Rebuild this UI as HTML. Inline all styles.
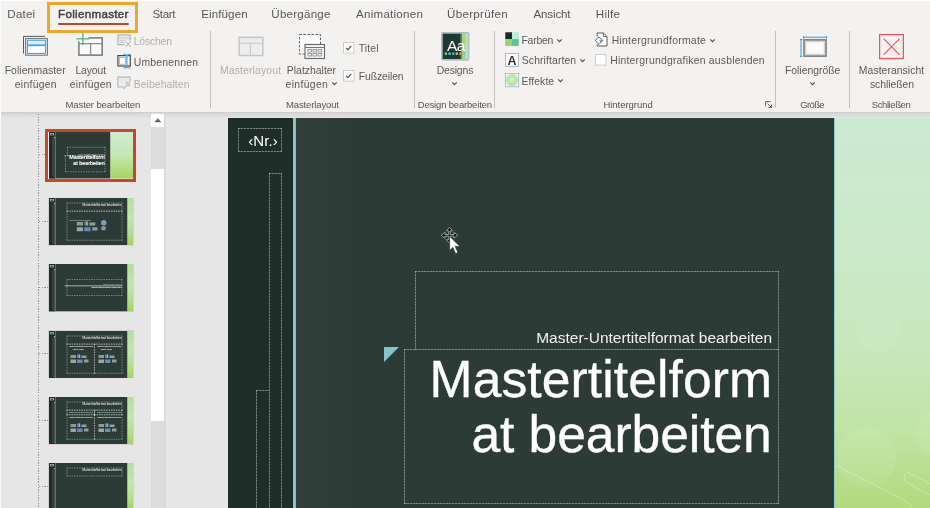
<!DOCTYPE html>
<html lang="de">
<head>
<meta charset="utf-8">
<title>Folienmaster</title>
<style>
html,body{margin:0;padding:0;}
body{width:930px;height:508px;overflow:hidden;background:#e6e6e6;font-family:"Liberation Sans",sans-serif;}
#app{position:relative;width:930px;height:508px;overflow:hidden;background:#e6e6e6;}
.t{position:absolute;white-space:nowrap;}
.abs{position:absolute;}
svg{position:absolute;overflow:visible;}
#soft{position:absolute;left:-12px;top:-12px;width:954px;height:532px;filter:blur(.35px);}
#stage{position:absolute;left:12px;top:12px;width:930px;height:508px;}

</style>
</head>
<body>
<div id="app"><div id="soft"><div id="stage">
<div style="position:absolute;left:-12px;top:-12px;width:954px;height:124px;background:#f3f2f1;"></div>
<div style="position:absolute;left:-12px;top:111.8px;width:954px;height:6.4px;background:linear-gradient(#cdcccb 0%,#d6d6d6 22%,#dcdcdc 55%,#e1e1e1 85%,#e6e6e6 100%);"></div>
<div style="position:absolute;left:-12px;top:118px;width:954px;height:404px;background:#e6e6e6;"></div>
<span class="t " style="left:7.35px;top:8.00px;font-size:11.6px;line-height:12px;color:#595755;letter-spacing:0.188px;">Datei</span>
<div style="position:absolute;left:47px;top:2px;width:91px;height:31px;box-sizing:border-box;border:3px solid #eba72e;"></div>
<span class="t " style="left:58.05px;top:8.00px;font-size:11.6px;line-height:12px;color:#41403f;letter-spacing:0.309px;-webkit-text-stroke:.45px #41403f;">Folienmaster</span>
<div style="position:absolute;left:58.3px;top:22.8px;width:70.4px;height:2.3px;background:#c5472a;border-radius:1.1px;"></div>
<span class="t " style="left:152.47px;top:8.00px;font-size:11.6px;line-height:12px;color:#595755;letter-spacing:-0.346px;">Start</span>
<span class="t " style="left:201.25px;top:8.00px;font-size:11.6px;line-height:12px;color:#595755;letter-spacing:0.087px;">Einfügen</span>
<span class="t " style="left:271.31px;top:8.00px;font-size:11.6px;line-height:12px;color:#595755;letter-spacing:0.226px;">Übergänge</span>
<span class="t " style="left:355.98px;top:8.00px;font-size:11.6px;line-height:12px;color:#595755;letter-spacing:0.249px;">Animationen</span>
<span class="t " style="left:447.11px;top:8.00px;font-size:11.6px;line-height:12px;color:#595755;letter-spacing:0.279px;">Überprüfen</span>
<span class="t " style="left:533.48px;top:8.00px;font-size:11.6px;line-height:12px;color:#595755;letter-spacing:-0.155px;">Ansicht</span>
<span class="t " style="left:595.85px;top:8.00px;font-size:11.6px;line-height:12px;color:#595755;letter-spacing:0.215px;">Hilfe</span>
<div style="position:absolute;left:209.7px;top:30.5px;width:1.2px;height:77.5px;background:#c4c2c0;"></div>
<div style="position:absolute;left:414.1px;top:30.5px;width:1.2px;height:77.5px;background:#c4c2c0;"></div>
<div style="position:absolute;left:494.3px;top:30.5px;width:1.2px;height:77.5px;background:#c4c2c0;"></div>
<div style="position:absolute;left:775.0px;top:30.5px;width:1.2px;height:77.5px;background:#c4c2c0;"></div>
<div style="position:absolute;left:848.9px;top:30.5px;width:1.2px;height:77.5px;background:#c4c2c0;"></div>
<span class="t " style="left:4.65px;top:65.00px;font-size:10.4px;line-height:11px;color:#5c5a58;letter-spacing:0.083px;">Folienmaster</span>
<span class="t " style="left:14.76px;top:79.00px;font-size:10.4px;line-height:11px;color:#5c5a58;letter-spacing:0.288px;">einfügen</span>
<span class="t " style="left:75.45px;top:65.00px;font-size:10.4px;line-height:11px;color:#5c5a58;letter-spacing:-0.119px;">Layout</span>
<span class="t " style="left:69.76px;top:79.00px;font-size:10.4px;line-height:11px;color:#5c5a58;letter-spacing:0.288px;">einfügen</span>
<span class="t " style="left:133.65px;top:36.00px;font-size:10.4px;line-height:11px;color:#b0aeac;letter-spacing:-0.149px;">Löschen</span>
<span class="t " style="left:133.70px;top:57.30px;font-size:10.4px;line-height:11px;color:#5c5a58;letter-spacing:0.226px;">Umbenennen</span>
<span class="t " style="left:133.65px;top:78.50px;font-size:10.4px;line-height:11px;color:#b0aeac;letter-spacing:0.099px;">Beibehalten</span>
<span class="t " style="left:219.95px;top:65.00px;font-size:10.4px;line-height:11px;color:#b0aeac;letter-spacing:0.154px;">Masterlayout</span>
<span class="t " style="left:286.85px;top:65.00px;font-size:10.4px;line-height:11px;color:#5c5a58;letter-spacing:0.009px;">Platzhalter</span>
<span class="t " style="left:285.56px;top:79.00px;font-size:10.4px;line-height:11px;color:#5c5a58;letter-spacing:0.345px;">einfügen</span>
<span class="t " style="left:358.67px;top:43.00px;font-size:10.4px;line-height:11px;color:#5c5a58;letter-spacing:0.146px;">Titel</span>
<span class="t " style="left:358.85px;top:71.30px;font-size:10.4px;line-height:11px;color:#5c5a58;letter-spacing:-0.104px;">Fußzeilen</span>
<span class="t " style="left:436.65px;top:65.00px;font-size:10.4px;line-height:11px;color:#5c5a58;letter-spacing:-0.141px;">Designs</span>
<span class="t " style="left:521.45px;top:35.30px;font-size:10.4px;line-height:11px;color:#5c5a58;letter-spacing:-0.205px;">Farben</span>
<span class="t " style="left:521.83px;top:55.30px;font-size:10.4px;line-height:11px;color:#5c5a58;letter-spacing:0.106px;">Schriftarten</span>
<span class="t " style="left:521.45px;top:75.70px;font-size:10.4px;line-height:11px;color:#5c5a58;letter-spacing:0.090px;">Effekte</span>
<span class="t " style="left:611.65px;top:35.30px;font-size:10.4px;line-height:11px;color:#5c5a58;letter-spacing:0.277px;">Hintergrundformate</span>
<span class="t " style="left:610.25px;top:55.30px;font-size:10.4px;line-height:11px;color:#5c5a58;letter-spacing:0.218px;">Hintergrundgrafiken ausblenden</span>
<span class="t " style="left:784.95px;top:65.00px;font-size:10.4px;line-height:11px;color:#5c5a58;">Foliengröße</span>
<span class="t " style="left:858.85px;top:65.00px;font-size:10.4px;line-height:11px;color:#5c5a58;letter-spacing:0.058px;">Masteransicht</span>
<span class="t " style="left:869.91px;top:79.00px;font-size:10.4px;line-height:11px;color:#5c5a58;letter-spacing:-0.043px;">schließen</span>
<span class="t " style="left:65.52px;top:98.50px;font-size:9.5px;line-height:11px;color:#575553;letter-spacing:-0.111px;">Master bearbeiten</span>
<span class="t " style="left:286.02px;top:98.50px;font-size:9.5px;line-height:11px;color:#575553;letter-spacing:-0.130px;">Masterlayout</span>
<span class="t " style="left:417.72px;top:98.50px;font-size:9.5px;line-height:11px;color:#575553;letter-spacing:-0.176px;">Design bearbeiten</span>
<span class="t " style="left:603.42px;top:98.50px;font-size:9.5px;line-height:11px;color:#575553;letter-spacing:-0.025px;">Hintergrund</span>
<span class="t " style="left:800.32px;top:98.50px;font-size:9.5px;line-height:11px;color:#575553;letter-spacing:-0.656px;">Größe</span>
<span class="t " style="left:871.77px;top:98.50px;font-size:9.5px;line-height:11px;color:#575553;letter-spacing:-0.412px;">Schließen</span>
<svg style="left:331.8px;top:82px" width="5" height="3" viewBox="0 0 5 3"><path d="M0.3 0.3 L2.5 2.6 L4.7 0.3" fill="none" stroke="#504e4c" stroke-width="1.15"/></svg>
<svg style="left:452px;top:82.3px" width="5" height="3" viewBox="0 0 5 3"><path d="M0.3 0.3 L2.5 2.6 L4.7 0.3" fill="none" stroke="#504e4c" stroke-width="1.15"/></svg>
<svg style="left:557px;top:38.7px" width="5" height="3" viewBox="0 0 5 3"><path d="M0.3 0.3 L2.5 2.6 L4.7 0.3" fill="none" stroke="#504e4c" stroke-width="1.15"/></svg>
<svg style="left:579.6px;top:58.8px" width="5" height="3" viewBox="0 0 5 3"><path d="M0.3 0.3 L2.5 2.6 L4.7 0.3" fill="none" stroke="#504e4c" stroke-width="1.15"/></svg>
<svg style="left:557.8px;top:79.3px" width="5" height="3" viewBox="0 0 5 3"><path d="M0.3 0.3 L2.5 2.6 L4.7 0.3" fill="none" stroke="#504e4c" stroke-width="1.15"/></svg>
<svg style="left:709.6px;top:38.7px" width="5" height="3" viewBox="0 0 5 3"><path d="M0.3 0.3 L2.5 2.6 L4.7 0.3" fill="none" stroke="#504e4c" stroke-width="1.15"/></svg>
<svg style="left:810.3px;top:82px" width="5" height="3" viewBox="0 0 5 3"><path d="M0.3 0.3 L2.5 2.6 L4.7 0.3" fill="none" stroke="#504e4c" stroke-width="1.15"/></svg>
<svg style="left:22px;top:35px" width="27" height="22" viewBox="0 0 27 22">
<path d="M1.5 18.6 V1.4 H23.2" fill="none" stroke="#5a5a5a" stroke-width="1"/>
<rect x="3.6" y="3.6" width="21.8" height="16.6" fill="#fff" stroke="#6a6a6a" stroke-width="1"/>
<rect x="5.4" y="5.3" width="18.2" height="13.2" fill="#fff" stroke="#4ba4e8" stroke-width="1.2"/>
<rect x="6" y="5.9" width="17" height="3.4" fill="#dcecfa"/>
<rect x="5.4" y="9.3" width="18.2" height="1.9" fill="#4ba4e8"/>
</svg>
<svg style="left:76px;top:33px" width="28" height="23" viewBox="0 0 28 23">
<rect x="2.9" y="4.9" width="23.3" height="17.2" fill="#fafafa" stroke="#808080" stroke-width="1.6"/>
<path d="M3 10.6 H26 M14.6 10.6 V22" stroke="#8e8e8e" stroke-width="1.2" fill="none"/>
<rect x="0" y="3.6" width="12.5" height="4.6" fill="#f3f2f1"/>
<path d="M0.4 5.9 H13.4 M6.9 0.3 V12.2" stroke="#55b573" stroke-width="1.3" fill="none"/>
</svg>
<svg style="left:110px;top:28px" width="30" height="67" viewBox="110 28 30 67">
<g>
<rect x="117.9" y="35.1" width="12.2" height="9.6" fill="#efefef" stroke="#b3b3b3" stroke-width="1.2"/>
<path d="M118 37.9 H130 M119.5 40.3 H126 M119.5 42.4 H124.5" stroke="#c4c4c4" stroke-width="1" fill="none"/>
<rect x="124.6" y="40.6" width="7" height="6.4" fill="#f3f2f1"/>
<path d="M125.6 41.6 L130.8 46.6 M130.8 41.6 L125.6 46.6" stroke="#b9b9b9" stroke-width="1.1" fill="none"/>
</g>
<g>
<rect x="117.9" y="55.6" width="12.4" height="10.4" fill="#f7f7f7" stroke="#4a4a4a" stroke-width="1.2"/>
<rect x="119.6" y="57.4" width="6" height="6.8" fill="#fff" stroke="#9a9a9a" stroke-width="0.7"/>
<path d="M123.3 54.3 Q126.6 54.3 126.9 56 Q127.2 54.3 130.5 54.3 M126.9 56 V66.3 M123.3 68 Q126.6 68 126.9 66.3 Q127.2 68 130.5 68" stroke="#4ba4e8" stroke-width="1.2" fill="none"/>
</g>
<g>
<path d="M124 87 H117.9 V77.2 H130.1 V82" fill="#f1f1f1" stroke="#b5b5b5" stroke-width="1.2"/>
<rect x="119.4" y="78.8" width="9" height="5" fill="#e9e9e9"/>
<path d="M126.3 81.8 L130.4 85.9 M129.9 82.3 L126.8 85.4 M126.6 85.6 L123 89.2" stroke="#b9b9b9" stroke-width="1.2" fill="none"/>
<path d="M127.2 82 L130.2 85 L128.2 86.6 L125.6 84 Z" fill="#d5d5d5" stroke="#b9b9b9" stroke-width="0.6"/>
</g>
</svg>
<svg style="left:238px;top:36px" width="26" height="21" viewBox="0 0 26 21">
<rect x="1.1" y="1.3" width="23.8" height="18.2" fill="#ededed" stroke="#c3c3c3" stroke-width="1.4"/>
<path d="M1 7.2 H25 M12.4 7.2 V19.5" stroke="#c8c8c8" stroke-width="1.1" fill="none"/>
</svg>
<svg style="left:298px;top:33px" width="28" height="27" viewBox="0 0 28 27">
<rect x="1.5" y="1.5" width="21" height="19.5" fill="#fbfbfb" stroke="#666" stroke-width="1" stroke-dasharray="2.5 1.5"/>
<rect x="7" y="11.5" width="19.5" height="14" fill="#f6f6f6" stroke="#666" stroke-width="1.1"/>
<path d="M7 14.5 H26.5" stroke="#777" stroke-width="1"/>
<g fill="none" stroke="#888" stroke-width="0.8"><rect x="10" y="16.5" width="3.5" height="2.5"/><rect x="15" y="16.5" width="3.5" height="2.5"/><rect x="20" y="16.5" width="3.5" height="2.5"/><rect x="10" y="20.5" width="3.5" height="2.5"/><rect x="15" y="20.5" width="3.5" height="2.5"/><rect x="20" y="20.5" width="3.5" height="2.5"/></g>
</svg>
<svg style="left:342.6px;top:41.8px" width="11.4" height="11.6" viewBox="0 0 11.4 11.6"><rect x="0.5" y="0.5" width="10.4" height="10.6" fill="#fff" stroke="#cfcdcb" stroke-width="1"/><path d="M3 5.8 L4.9 7.7 L8.3 3.9" fill="none" stroke="#4a4a4a" stroke-width="1.1"/></svg>
<svg style="left:342.6px;top:70.2px" width="11.4" height="11.6" viewBox="0 0 11.4 11.6"><rect x="0.5" y="0.5" width="10.4" height="10.6" fill="#fff" stroke="#cfcdcb" stroke-width="1"/><path d="M3 5.8 L4.9 7.7 L8.3 3.9" fill="none" stroke="#4a4a4a" stroke-width="1.1"/></svg>
<svg style="left:594.5px;top:54px" width="11.4" height="11.6" viewBox="0 0 11.4 11.6"><rect x="0.5" y="0.5" width="10.4" height="10.6" fill="#fff" stroke="#cfcdcb" stroke-width="1"/></svg>
<svg style="left:440.7px;top:32px" width="28.4" height="28.7" viewBox="0 0 28.4 28.7">
<rect x="0" y="0" width="28.4" height="28.7" rx="1.6" fill="#b3bccd"/>
<rect x="1.7" y="1.7" width="19" height="25.3" fill="#20382f"/>
<rect x="20.4" y="1.7" width="6.3" height="25.3" fill="#a6d389"/>
<rect x="19.4" y="1.7" width="1.6" height="25.3" fill="#5d8a60"/>
<rect x="24.6" y="1.7" width="2.1" height="25.3" fill="#c5e5b2"/>
<text x="6" y="18.6" font-family="Liberation Sans, sans-serif" font-size="15.5" fill="#fff" letter-spacing="-0.6">Aa</text>
<g><rect x="3.7" y="20.5" width="2.4" height="2.4" fill="#7ed36a"/><rect x="7.4" y="20.5" width="2.4" height="2.4" fill="#59c9b5"/><rect x="11.1" y="20.5" width="2.4" height="2.4" fill="#49a6e0"/><rect x="14.7" y="20.5" width="2.4" height="2.4" fill="#f0b43c"/><rect x="18.2" y="20.5" width="2.4" height="2.4" fill="#ee8a3a"/><rect x="21.7" y="20.5" width="2.4" height="2.4" fill="#6cc0ea"/></g>
</svg>
<svg style="left:505px;top:31.9px" width="14" height="14.2" viewBox="0 0 14 14.2">
<rect x="0" y="0" width="14" height="14.2" fill="#dfe5e2"/>
<rect x="0.3" y="0.3" width="6.7" height="6.8" fill="#1b2a25"/>
<rect x="7" y="0.3" width="6.7" height="6.8" fill="#b5f0dc"/>
<rect x="0.3" y="7.1" width="6.7" height="6.8" fill="#92d37c"/>
<rect x="7" y="7.1" width="6.7" height="6.8" fill="#5ec48d"/>
</svg>
<svg style="left:505px;top:52.6px" width="14" height="14.2" viewBox="0 0 14 14.2">
<rect x="0.5" y="0.5" width="13" height="13.2" fill="#fff" stroke="#b3bccd" stroke-width="1"/>
<text x="7" y="12" text-anchor="middle" font-family="Liberation Sans, sans-serif" font-size="12.5" font-weight="bold" fill="#3a3336">A</text>
</svg>
<svg style="left:505px;top:73px" width="14" height="14.2" viewBox="0 0 14 14.2">
<defs><radialGradient id="efg" cx="50%" cy="45%" r="60%"><stop offset="0" stop-color="#d3efc8"/><stop offset="0.75" stop-color="#b4e3a3"/><stop offset="1" stop-color="#9fd98a"/></radialGradient></defs>
<rect x="0.5" y="0.5" width="13" height="13.2" fill="#f6f6f6" stroke="#b3bccd" stroke-width="1"/>
<circle cx="7" cy="7.1" r="6" fill="url(#efg)"/>
</svg>
<svg style="left:594px;top:31.8px" width="14" height="15" viewBox="0 0 14 15">
<path d="M3.2 4.5 V1 H9.4 L13 4.6 V14 H3.2 V12.2" fill="#fff" stroke="#5a5a5a" stroke-width="1"/>
<path d="M9.4 1 V4.6 H13" fill="none" stroke="#5a5a5a" stroke-width="0.9"/>
<path d="M1.2 8.6 L5 4.8 L8.8 8.6 L5 12.4 Z" fill="#fff" stroke="#5a5a5a" stroke-width="1"/>
<path d="M5.2 8.6 H8.6 L7 10.4 Z" fill="#3a96dd"/>
<circle cx="7.4" cy="8.6" r="1.1" fill="#4ba4e8"/>
</svg>
<svg style="left:765.2px;top:100.7px" width="7.2" height="7.2" viewBox="0 0 7.2 7.2">
<path d="M0.6 5.4 V0.6 H5.4" fill="none" stroke="#5f5f5f" stroke-width="1"/>
<path d="M2.6 2.6 L6.5 6.5 M6.6 3.4 V6.6 H3.4" fill="none" stroke="#5f5f5f" stroke-width="1"/>
</svg>
<svg style="left:800px;top:35.5px" width="27" height="22" viewBox="0 0 27 22">
<rect x="4" y="3.9" width="22" height="16.2" fill="#fafafa" stroke="#7a7a7a" stroke-width="1.6"/>
<rect x="5.8" y="5.7" width="18.4" height="12.6" fill="none" stroke="#bdbdbd" stroke-width="0.8"/>
<path d="M3.5 1.2 H26.5 M3.5 0 V2.5 M26.5 0 V2.5" stroke="#3a96dd" stroke-width="1" fill="none"/>
<path d="M1 3.5 V20.6 M0 3.5 H2.2 M0 20.6 H2.2" stroke="#3a96dd" stroke-width="1" fill="none"/>
</svg>
<svg style="left:879.3px;top:33.7px" width="25" height="25.3" viewBox="0 0 25 25.3">
<rect x="0.6" y="0.6" width="23.8" height="24.1" fill="#fbf3f3" stroke="#e9535e" stroke-width="1.2"/>
<rect x="1.8" y="1.8" width="21.4" height="21.7" fill="none" stroke="#f6c9cc" stroke-width="0.8"/>
<path d="M4.6 4.6 L20.6 20.8 M20.6 4.6 L4.6 20.8" stroke="#e9535e" stroke-width="1.15" fill="none"/>
</svg>
<div style="position:absolute;left:27px;top:112.8px;width:106.5px;height:1px;background:#d3d3d3;"></div>
<div style="position:absolute;left:38px;top:114px;width:1px;height:400px;background:repeating-linear-gradient(180deg,#999 0,#999 1.3px,rgba(0,0,0,0) 1.3px,rgba(0,0,0,0) 2.7px);"></div>
<div style="position:absolute;left:39px;top:154.2px;width:6px;height:1px;background:repeating-linear-gradient(90deg,#999 0,#999 1.3px,rgba(0,0,0,0) 1.3px,rgba(0,0,0,0) 2.7px);"></div>
<div style="position:absolute;left:39px;top:220.7px;width:9.5px;height:1px;background:repeating-linear-gradient(90deg,#999 0,#999 1.3px,rgba(0,0,0,0) 1.3px,rgba(0,0,0,0) 2.7px);"></div>
<div style="position:absolute;left:39px;top:287.0px;width:9.5px;height:1px;background:repeating-linear-gradient(90deg,#999 0,#999 1.3px,rgba(0,0,0,0) 1.3px,rgba(0,0,0,0) 2.7px);"></div>
<div style="position:absolute;left:39px;top:353.4px;width:9.5px;height:1px;background:repeating-linear-gradient(90deg,#999 0,#999 1.3px,rgba(0,0,0,0) 1.3px,rgba(0,0,0,0) 2.7px);"></div>
<div style="position:absolute;left:39px;top:419.7px;width:9.5px;height:1px;background:repeating-linear-gradient(90deg,#999 0,#999 1.3px,rgba(0,0,0,0) 1.3px,rgba(0,0,0,0) 2.7px);"></div>
<div style="position:absolute;left:39px;top:486.0px;width:9.5px;height:1px;background:repeating-linear-gradient(90deg,#999 0,#999 1.3px,rgba(0,0,0,0) 1.3px,rgba(0,0,0,0) 2.7px);"></div>
<div style="position:absolute;left:150.6px;top:113.6px;width:14.2px;height:400px;background:#d9d9d9;"></div>
<div style="position:absolute;left:151px;top:114px;width:13.4px;height:400px;background:#dcdcdc;"></div>
<div style="position:absolute;left:165.3px;top:118px;width:1px;height:400px;background:#dedede;"></div>
<div style="position:absolute;left:151px;top:114px;width:13.3px;height:12.8px;background:#fff;"></div>
<svg style="left:153.7px;top:118.3px" width="7.7" height="4.4" viewBox="0 0 8 5"><path d="M0 4.7 L4 0.3 L8 4.7 Z" fill="#686868"/></svg>
<div style="position:absolute;left:151px;top:168.6px;width:13.3px;height:252.6px;background:#fff;"></div>
<div style="position:absolute;left:45.2px;top:128.5px;width:91px;height:53.5px;background:#f3f2f1;border:3px solid #c6482a;box-sizing:border-box;"></div>
<div class="abs" style="left:48.7px;top:132px;width:84.6px;height:46.5px;overflow:hidden;"><div style="position:absolute;left:0;top:0;width:338.4px;height:186.0px;transform:scale(0.25);transform-origin:0 0;"><div style="position:absolute;left:0.0px;top:0.0px;width:246.0px;height:186.0px;background:#2d3b36;"></div><div style="position:absolute;left:246.0px;top:0.0px;width:92.4px;height:186.0px;background:linear-gradient(180deg,#cdebd3 0%,#c4e8b4 50%,#a6d45e 100%);"></div><div style="position:absolute;left:0.0px;top:0.0px;width:24.0px;height:186.0px;background:#202e2a;"></div><div style="position:absolute;left:24.0px;top:0.0px;width:2.4px;height:186.0px;background:#74b0b5;"></div><div style="position:absolute;left:4.0px;top:4.0px;width:16.0px;height:9.0px;border:2px solid #ddd;box-sizing:border-box;"></div><div style="position:absolute;left:15.0px;top:20.0px;width:7.0px;height:160.0px;border:2px dotted rgba(230,230,230,.8);box-sizing:border-box;"></div><div style="position:absolute;left:73.0px;top:60.0px;width:152.0px;height:36.0px;border:2.6px dashed rgba(235,235,235,.8);box-sizing:border-box;"></div><div style="position:absolute;left:65.0px;top:94.0px;width:160.0px;height:66.0px;border:2.6px dashed rgba(235,235,235,.8);box-sizing:border-box;"></div><div style="position:absolute;left:60.0px;top:93.0px;width:6.0px;height:6.0px;background:#86c4c9;clip-path:polygon(0 0,100% 0,0 100%);"></div><div style="position:absolute;right:115.4px;top:90.0px;font-size:21.5px;line-height:21.5px;color:#fff;white-space:nowrap;font-weight:normal;-webkit-text-stroke:.7px #fff">Mastertitelform</div><div style="position:absolute;right:115.4px;top:115.0px;font-size:21.5px;line-height:21.5px;color:#fff;white-space:nowrap;font-weight:normal;-webkit-text-stroke:.7px #fff">at bearbeiten</div><div style="position:absolute;right:115.4px;top:84.0px;font-size:7px;line-height:7px;color:#ccc;white-space:nowrap;font-weight:normal">Master-Untertitelformat bearbeiten</div></div></div>
<div style="position:absolute;left:48.1px;top:197.5px;width:85.5px;height:48.3px;background:#d2d2d2;"></div>
<div class="abs" style="left:48.6px;top:198px;width:84.5px;height:47.3px;overflow:hidden;"><div style="position:absolute;left:0;top:0;width:338.0px;height:189.2px;transform:scale(0.25);transform-origin:0 0;"><div style="position:absolute;left:0.0px;top:0.0px;width:314.0px;height:189.2px;background:#2d3b36;"></div><div style="position:absolute;left:314.0px;top:0.0px;width:24.0px;height:189.2px;background:linear-gradient(180deg,#b3dfa0 0%,#c1e6ae 42%,#b5de8c 75%,#a3d35c 100%);"></div><div style="position:absolute;left:0.0px;top:0.0px;width:24.0px;height:189.2px;background:#202e2a;"></div><div style="position:absolute;left:24.0px;top:0.0px;width:2.4px;height:189.2px;background:#74b0b5;"></div><div style="position:absolute;left:4.0px;top:4.0px;width:16.0px;height:9.0px;border:2px solid #ddd;box-sizing:border-box;"></div><div style="position:absolute;left:15.0px;top:20.0px;width:7.0px;height:163.2px;border:2px dotted rgba(230,230,230,.8);box-sizing:border-box;"></div><div style="position:absolute;left:71.0px;top:19.0px;width:222.0px;height:34.0px;border:2.6px dashed rgba(235,235,235,.8);box-sizing:border-box;"></div><div style="position:absolute;left:71.0px;top:52.0px;width:222.0px;height:118.0px;border:2.6px dashed rgba(235,235,235,.8);box-sizing:border-box;"></div><div style="position:absolute;right:48.0px;top:23.0px;font-size:12.5px;line-height:12.5px;color:#fff;white-space:nowrap;font-weight:normal">Mastertitelformat bearbeiten</div><div style="position:absolute;right:170.0px;top:84.0px;font-size:7px;line-height:7px;color:#ddd;white-space:nowrap;font-weight:normal">Mastertextformat bearbeiten</div><div style="position:absolute;left:110.9px;top:95.9px;width:25.3px;height:13.8px;background:#9aa3a0;opacity:.9;"></div><div style="position:absolute;left:140.8px;top:93.6px;width:16.1px;height:16.1px;background:#5a86c0;opacity:.9;"></div><div style="position:absolute;left:148.8px;top:93.6px;width:5.8px;height:16.1px;background:#e0b050;opacity:.9;"></div><div style="position:absolute;left:161.5px;top:98.2px;width:23.0px;height:11.5px;background:#8ab5a8;opacity:.9;"></div><div style="position:absolute;left:110.9px;top:116.6px;width:25.3px;height:16.1px;background:#aab0ae;opacity:.9;"></div><div style="position:absolute;left:140.8px;top:116.6px;width:25.3px;height:16.1px;background:#6f93c4;opacity:.9;"></div><div style="position:absolute;left:173.0px;top:116.6px;width:20.7px;height:13.8px;background:#a0a6a4;opacity:.9;"></div><div style="position:absolute;left:208.0px;top:88.0px;width:22.0px;height:22.0px;background:#8fb1c8;border-radius:50%;opacity:.85;"></div><div style="position:absolute;left:208.0px;top:112.0px;width:20.0px;height:18.0px;background:#9fb3be;border-radius:50%;opacity:.75;"></div></div></div>
<div style="position:absolute;left:48.1px;top:263.8px;width:85.5px;height:48.3px;background:#d2d2d2;"></div>
<div class="abs" style="left:48.6px;top:264.3px;width:84.5px;height:47.3px;overflow:hidden;"><div style="position:absolute;left:0;top:0;width:338.0px;height:189.2px;transform:scale(0.25);transform-origin:0 0;"><div style="position:absolute;left:0.0px;top:0.0px;width:314.0px;height:189.2px;background:#2d3b36;"></div><div style="position:absolute;left:314.0px;top:0.0px;width:24.0px;height:189.2px;background:linear-gradient(180deg,#b3dfa0 0%,#c1e6ae 42%,#b5de8c 75%,#a3d35c 100%);"></div><div style="position:absolute;left:0.0px;top:0.0px;width:24.0px;height:189.2px;background:#202e2a;"></div><div style="position:absolute;left:24.0px;top:0.0px;width:2.4px;height:189.2px;background:#74b0b5;"></div><div style="position:absolute;left:4.0px;top:4.0px;width:16.0px;height:9.0px;border:2px solid #ddd;box-sizing:border-box;"></div><div style="position:absolute;left:15.0px;top:20.0px;width:7.0px;height:163.2px;border:2px dotted rgba(230,230,230,.8);box-sizing:border-box;"></div><div style="position:absolute;left:71.0px;top:61.0px;width:222.0px;height:66.0px;border:2.6px dashed rgba(235,235,235,.8);box-sizing:border-box;"></div><div style="position:absolute;left:63.0px;top:86.0px;width:230.0px;height:3.0px;background:rgba(235,235,235,.9);"></div><div style="position:absolute;right:47.0px;top:88.0px;font-size:9px;line-height:9px;color:#fff;white-space:nowrap;font-weight:bold">Mastertitelformat bearbeiten</div><div style="position:absolute;right:47.0px;top:78.0px;font-size:6px;line-height:6px;color:#bbb;white-space:nowrap;font-weight:normal">Mastertextformat bearbeiten</div></div></div>
<div style="position:absolute;left:48.1px;top:330.2px;width:85.5px;height:48.3px;background:#d2d2d2;"></div>
<div class="abs" style="left:48.6px;top:330.7px;width:84.5px;height:47.3px;overflow:hidden;"><div style="position:absolute;left:0;top:0;width:338.0px;height:189.2px;transform:scale(0.25);transform-origin:0 0;"><div style="position:absolute;left:0.0px;top:0.0px;width:314.0px;height:189.2px;background:#2d3b36;"></div><div style="position:absolute;left:314.0px;top:0.0px;width:24.0px;height:189.2px;background:linear-gradient(180deg,#b3dfa0 0%,#c1e6ae 42%,#b5de8c 75%,#a3d35c 100%);"></div><div style="position:absolute;left:0.0px;top:0.0px;width:24.0px;height:189.2px;background:#202e2a;"></div><div style="position:absolute;left:24.0px;top:0.0px;width:2.4px;height:189.2px;background:#74b0b5;"></div><div style="position:absolute;left:4.0px;top:4.0px;width:16.0px;height:9.0px;border:2px solid #ddd;box-sizing:border-box;"></div><div style="position:absolute;left:15.0px;top:20.0px;width:7.0px;height:163.2px;border:2px dotted rgba(230,230,230,.8);box-sizing:border-box;"></div><div style="position:absolute;left:71.0px;top:19.0px;width:222.0px;height:34.0px;border:2.6px dashed rgba(235,235,235,.8);box-sizing:border-box;"></div><div style="position:absolute;left:71.0px;top:52.0px;width:112.0px;height:118.0px;border:2.6px dashed rgba(235,235,235,.8);box-sizing:border-box;"></div><div style="position:absolute;left:181.0px;top:52.0px;width:112.0px;height:118.0px;border:2.6px dashed rgba(235,235,235,.8);box-sizing:border-box;"></div><div style="position:absolute;right:48.0px;top:23.0px;font-size:12.5px;line-height:12.5px;color:#fff;white-space:nowrap;font-weight:normal">Mastertitelformat bearbeiten</div><div style="position:absolute;right:162.0px;top:58.0px;font-size:7px;line-height:7px;color:#eee;white-space:nowrap;font-weight:bold">Mastertextformat bearbeiten</div><div style="position:absolute;right:50.0px;top:58.0px;font-size:7px;line-height:7px;color:#eee;white-space:nowrap;font-weight:bold">Mastertextformat bearbeiten</div><div style="position:absolute;right:198.0px;top:70.0px;font-size:7px;line-height:7px;color:#eee;white-space:nowrap;font-weight:bold">Zweite Ebene</div><div style="position:absolute;right:86.0px;top:70.0px;font-size:7px;line-height:7px;color:#eee;white-space:nowrap;font-weight:bold">Zweite Ebene</div><div style="position:absolute;left:86.0px;top:96.0px;width:22.0px;height:12.0px;background:#9aa3a0;opacity:.9;"></div><div style="position:absolute;left:112.0px;top:94.0px;width:14.0px;height:14.0px;background:#5a86c0;opacity:.9;"></div><div style="position:absolute;left:119.0px;top:94.0px;width:5.0px;height:14.0px;background:#e0b050;opacity:.9;"></div><div style="position:absolute;left:130.0px;top:98.0px;width:20.0px;height:10.0px;background:#8ab5a8;opacity:.9;"></div><div style="position:absolute;left:86.0px;top:114.0px;width:22.0px;height:14.0px;background:#aab0ae;opacity:.9;"></div><div style="position:absolute;left:112.0px;top:114.0px;width:22.0px;height:14.0px;background:#6f93c4;opacity:.9;"></div><div style="position:absolute;left:140.0px;top:114.0px;width:18.0px;height:12.0px;background:#a0a6a4;opacity:.9;"></div><div style="position:absolute;left:198.0px;top:96.0px;width:22.0px;height:12.0px;background:#9aa3a0;opacity:.9;"></div><div style="position:absolute;left:224.0px;top:94.0px;width:14.0px;height:14.0px;background:#5a86c0;opacity:.9;"></div><div style="position:absolute;left:231.0px;top:94.0px;width:5.0px;height:14.0px;background:#e0b050;opacity:.9;"></div><div style="position:absolute;left:242.0px;top:98.0px;width:20.0px;height:10.0px;background:#8ab5a8;opacity:.9;"></div><div style="position:absolute;left:198.0px;top:114.0px;width:22.0px;height:14.0px;background:#aab0ae;opacity:.9;"></div><div style="position:absolute;left:224.0px;top:114.0px;width:22.0px;height:14.0px;background:#6f93c4;opacity:.9;"></div><div style="position:absolute;left:252.0px;top:114.0px;width:18.0px;height:12.0px;background:#a0a6a4;opacity:.9;"></div></div></div>
<div style="position:absolute;left:48.1px;top:396.5px;width:85.5px;height:48.3px;background:#d2d2d2;"></div>
<div class="abs" style="left:48.6px;top:397px;width:84.5px;height:47.3px;overflow:hidden;"><div style="position:absolute;left:0;top:0;width:338.0px;height:189.2px;transform:scale(0.25);transform-origin:0 0;"><div style="position:absolute;left:0.0px;top:0.0px;width:314.0px;height:189.2px;background:#2d3b36;"></div><div style="position:absolute;left:314.0px;top:0.0px;width:24.0px;height:189.2px;background:linear-gradient(180deg,#b3dfa0 0%,#c1e6ae 42%,#b5de8c 75%,#a3d35c 100%);"></div><div style="position:absolute;left:0.0px;top:0.0px;width:24.0px;height:189.2px;background:#202e2a;"></div><div style="position:absolute;left:24.0px;top:0.0px;width:2.4px;height:189.2px;background:#74b0b5;"></div><div style="position:absolute;left:4.0px;top:4.0px;width:16.0px;height:9.0px;border:2px solid #ddd;box-sizing:border-box;"></div><div style="position:absolute;left:15.0px;top:20.0px;width:7.0px;height:163.2px;border:2px dotted rgba(230,230,230,.8);box-sizing:border-box;"></div><div style="position:absolute;left:71.0px;top:19.0px;width:222.0px;height:34.0px;border:2.6px dashed rgba(235,235,235,.8);box-sizing:border-box;"></div><div style="position:absolute;left:71.0px;top:52.0px;width:112.0px;height:20.0px;border:2.6px dashed rgba(235,235,235,.8);box-sizing:border-box;"></div><div style="position:absolute;left:181.0px;top:52.0px;width:112.0px;height:20.0px;border:2.6px dashed rgba(235,235,235,.8);box-sizing:border-box;"></div><div style="position:absolute;left:71.0px;top:70.0px;width:112.0px;height:100.0px;border:2.6px dashed rgba(235,235,235,.8);box-sizing:border-box;"></div><div style="position:absolute;left:181.0px;top:70.0px;width:112.0px;height:100.0px;border:2.6px dashed rgba(235,235,235,.8);box-sizing:border-box;"></div><div style="position:absolute;right:48.0px;top:23.0px;font-size:12.5px;line-height:12.5px;color:#fff;white-space:nowrap;font-weight:normal">Mastertitelformat bearbeiten</div><div style="position:absolute;right:162.0px;top:58.0px;font-size:7px;line-height:7px;color:#9cc;white-space:nowrap;font-weight:bold">Mastertextformat bearbeiten</div><div style="position:absolute;right:50.0px;top:58.0px;font-size:7px;line-height:7px;color:#9cc;white-space:nowrap;font-weight:bold">Mastertextformat bearbeiten</div><div style="position:absolute;right:162.0px;top:77.0px;font-size:7px;line-height:7px;color:#eee;white-space:nowrap;font-weight:bold">Mastertextformat bearbeiten</div><div style="position:absolute;right:50.0px;top:77.0px;font-size:7px;line-height:7px;color:#eee;white-space:nowrap;font-weight:bold">Mastertextformat bearbeiten</div><div style="position:absolute;left:86.0px;top:108.0px;width:22.0px;height:12.0px;background:#9aa3a0;opacity:.9;"></div><div style="position:absolute;left:112.0px;top:106.0px;width:14.0px;height:14.0px;background:#5a86c0;opacity:.9;"></div><div style="position:absolute;left:119.0px;top:106.0px;width:5.0px;height:14.0px;background:#e0b050;opacity:.9;"></div><div style="position:absolute;left:130.0px;top:110.0px;width:20.0px;height:10.0px;background:#8ab5a8;opacity:.9;"></div><div style="position:absolute;left:86.0px;top:126.0px;width:22.0px;height:14.0px;background:#aab0ae;opacity:.9;"></div><div style="position:absolute;left:112.0px;top:126.0px;width:22.0px;height:14.0px;background:#6f93c4;opacity:.9;"></div><div style="position:absolute;left:140.0px;top:126.0px;width:18.0px;height:12.0px;background:#a0a6a4;opacity:.9;"></div><div style="position:absolute;left:198.0px;top:108.0px;width:22.0px;height:12.0px;background:#9aa3a0;opacity:.9;"></div><div style="position:absolute;left:224.0px;top:106.0px;width:14.0px;height:14.0px;background:#5a86c0;opacity:.9;"></div><div style="position:absolute;left:231.0px;top:106.0px;width:5.0px;height:14.0px;background:#e0b050;opacity:.9;"></div><div style="position:absolute;left:242.0px;top:110.0px;width:20.0px;height:10.0px;background:#8ab5a8;opacity:.9;"></div><div style="position:absolute;left:198.0px;top:126.0px;width:22.0px;height:14.0px;background:#aab0ae;opacity:.9;"></div><div style="position:absolute;left:224.0px;top:126.0px;width:22.0px;height:14.0px;background:#6f93c4;opacity:.9;"></div><div style="position:absolute;left:252.0px;top:126.0px;width:18.0px;height:12.0px;background:#a0a6a4;opacity:.9;"></div></div></div>
<div style="position:absolute;left:48.1px;top:462.8px;width:85.5px;height:48.3px;background:#d2d2d2;"></div>
<div class="abs" style="left:48.6px;top:463.3px;width:84.5px;height:47.3px;overflow:hidden;"><div style="position:absolute;left:0;top:0;width:338.0px;height:189.2px;transform:scale(0.25);transform-origin:0 0;"><div style="position:absolute;left:0.0px;top:0.0px;width:314.0px;height:189.2px;background:#2d3b36;"></div><div style="position:absolute;left:314.0px;top:0.0px;width:24.0px;height:189.2px;background:linear-gradient(180deg,#b3dfa0 0%,#c1e6ae 42%,#b5de8c 75%,#a3d35c 100%);"></div><div style="position:absolute;left:0.0px;top:0.0px;width:24.0px;height:189.2px;background:#202e2a;"></div><div style="position:absolute;left:24.0px;top:0.0px;width:2.4px;height:189.2px;background:#74b0b5;"></div><div style="position:absolute;left:4.0px;top:4.0px;width:16.0px;height:9.0px;border:2px solid #ddd;box-sizing:border-box;"></div><div style="position:absolute;left:15.0px;top:20.0px;width:7.0px;height:163.2px;border:2px dotted rgba(230,230,230,.8);box-sizing:border-box;"></div><div style="position:absolute;left:71.0px;top:19.0px;width:222.0px;height:34.0px;border:2.6px dashed rgba(235,235,235,.8);box-sizing:border-box;"></div><div style="position:absolute;right:48.0px;top:23.0px;font-size:12.5px;line-height:12.5px;color:#fff;white-space:nowrap;font-weight:normal">Mastertitelformat bearbeiten</div></div></div>
<div style="position:absolute;left:227.5px;top:118px;width:714.5px;height:402px;background:#2d3b36;"></div>
<div style="position:absolute;left:296px;top:118px;width:60px;height:402px;background:linear-gradient(90deg,rgba(255,255,255,.02),rgba(255,255,255,0));"></div>
<div style="position:absolute;left:227.5px;top:118px;width:65.69999999999999px;height:402px;background:#202e2a;"></div>
<div style="position:absolute;left:293.1px;top:118px;width:3.2px;height:402px;background:linear-gradient(90deg,#8ac6cb 0%,#90c7cc 60%,#7fb4b9 100%);"></div>
<div style="position:absolute;left:834.6px;top:118px;width:108px;height:402px;background:linear-gradient(180deg,#cce9d2 0%,#caeaca 33%,#c7e8bb 58%,#bfe4a4 78%,#b6dd88 91%,#b2da7c 97%);"></div>
<svg style="left:834px;top:118px" width="96" height="390" viewBox="834 118 96 390">
<circle cx="866.5" cy="457" r="30" fill="rgba(255,255,255,.075)"/>
<circle cx="942" cy="433" r="26" fill="rgba(255,255,255,.075)"/>
<circle cx="878" cy="330" r="22" fill="rgba(255,255,255,.05)"/>
<path d="M835 465 L903 499.5 Q910 503 913 510" fill="none" stroke="rgba(255,255,255,.32)" stroke-width="0.9"/>
<path d="M932 484.5 L909 473.2 Q904.5 471.5 904.3 476 V478 Q904.5 481.5 908 483.3 L932 496" fill="none" stroke="rgba(255,255,255,.32)" stroke-width="0.9"/>
</svg>
<div style="position:absolute;left:833.5px;top:118px;width:1.5px;height:402px;background:#92cdd0;"></div>
<div style="position:absolute;left:238.3px;top:128.3px;width:44px;height:1px;background:repeating-linear-gradient(90deg,rgba(210,216,213,.47) 0,rgba(210,216,213,.47) 2px,rgba(210,216,213,.2) 2px,rgba(210,216,213,.2) 3px);"></div><div style="position:absolute;left:238.3px;top:150.8px;width:44px;height:1px;background:repeating-linear-gradient(90deg,rgba(210,216,213,.47) 0,rgba(210,216,213,.47) 2px,rgba(210,216,213,.2) 2px,rgba(210,216,213,.2) 3px);"></div><div style="position:absolute;left:238.3px;top:128.3px;width:1px;height:23.5px;background:repeating-linear-gradient(180deg,rgba(210,216,213,.47) 0,rgba(210,216,213,.47) 2px,rgba(210,216,213,.2) 2px,rgba(210,216,213,.2) 3px);"></div><div style="position:absolute;left:281.3px;top:128.3px;width:1px;height:23.5px;background:repeating-linear-gradient(180deg,rgba(210,216,213,.47) 0,rgba(210,216,213,.47) 2px,rgba(210,216,213,.2) 2px,rgba(210,216,213,.2) 3px);"></div>
<span class="t " style="left:248.26px;top:132.00px;font-size:15px;line-height:17px;color:#fff;letter-spacing:0.076px;">‹Nr.›</span>
<div style="position:absolute;left:269px;top:172.8px;width:13px;height:1px;background:repeating-linear-gradient(90deg,rgba(210,216,213,.47) 0,rgba(210,216,213,.47) 2px,rgba(210,216,213,.2) 2px,rgba(210,216,213,.2) 3px);"></div><div style="position:absolute;left:269px;top:172.8px;width:1px;height:350px;background:repeating-linear-gradient(180deg,rgba(210,216,213,.47) 0,rgba(210,216,213,.47) 2px,rgba(210,216,213,.2) 2px,rgba(210,216,213,.2) 3px);"></div><div style="position:absolute;left:281px;top:172.8px;width:1px;height:350px;background:repeating-linear-gradient(180deg,rgba(210,216,213,.47) 0,rgba(210,216,213,.47) 2px,rgba(210,216,213,.2) 2px,rgba(210,216,213,.2) 3px);"></div>
<div style="position:absolute;left:256.2px;top:389.7px;width:13.3px;height:1px;background:repeating-linear-gradient(90deg,rgba(210,216,213,.47) 0,rgba(210,216,213,.47) 2px,rgba(210,216,213,.2) 2px,rgba(210,216,213,.2) 3px);"></div><div style="position:absolute;left:256.2px;top:389.7px;width:1px;height:140px;background:repeating-linear-gradient(180deg,rgba(210,216,213,.47) 0,rgba(210,216,213,.47) 2px,rgba(210,216,213,.2) 2px,rgba(210,216,213,.2) 3px);"></div>
<div style="position:absolute;left:415px;top:270.8px;width:363.8px;height:1px;background:repeating-linear-gradient(90deg,rgba(210,216,213,.47) 0,rgba(210,216,213,.47) 2px,rgba(210,216,213,.2) 2px,rgba(210,216,213,.2) 3px);"></div><div style="position:absolute;left:415px;top:270.8px;width:1px;height:79px;background:repeating-linear-gradient(180deg,rgba(210,216,213,.47) 0,rgba(210,216,213,.47) 2px,rgba(210,216,213,.2) 2px,rgba(210,216,213,.2) 3px);"></div><div style="position:absolute;left:777.8px;top:270.8px;width:1px;height:79px;background:repeating-linear-gradient(180deg,rgba(210,216,213,.47) 0,rgba(210,216,213,.47) 2px,rgba(210,216,213,.2) 2px,rgba(210,216,213,.2) 3px);"></div>
<div style="position:absolute;left:404.2px;top:348.8px;width:374.6px;height:1px;background:repeating-linear-gradient(90deg,rgba(210,216,213,.47) 0,rgba(210,216,213,.47) 2px,rgba(210,216,213,.2) 2px,rgba(210,216,213,.2) 3px);"></div><div style="position:absolute;left:404.2px;top:502.6px;width:374.6px;height:1px;background:repeating-linear-gradient(90deg,rgba(210,216,213,.47) 0,rgba(210,216,213,.47) 2px,rgba(210,216,213,.2) 2px,rgba(210,216,213,.2) 3px);"></div><div style="position:absolute;left:404.2px;top:348.8px;width:1px;height:154.8px;background:repeating-linear-gradient(180deg,rgba(210,216,213,.47) 0,rgba(210,216,213,.47) 2px,rgba(210,216,213,.2) 2px,rgba(210,216,213,.2) 3px);"></div><div style="position:absolute;left:777.8px;top:348.8px;width:1px;height:154.8px;background:repeating-linear-gradient(180deg,rgba(210,216,213,.47) 0,rgba(210,216,213,.47) 2px,rgba(210,216,213,.2) 2px,rgba(210,216,213,.2) 3px);"></div>
<svg style="left:384px;top:346.6px" width="15" height="15" viewBox="0 0 15 15"><path d="M0 0 H15 L0 15 Z" fill="#86c4c9"/></svg>
<span class="t " style="left:536.23px;top:329.00px;font-size:15.5px;line-height:17px;color:#f2f2f2;letter-spacing:-0.008px;">Master-Untertitelformat bearbeiten</span>
<span class="t " style="left:429.57px;top:350.00px;font-size:51.6px;line-height:58px;color:#fff;letter-spacing:0.096px;-webkit-text-stroke:.35px #fff;">Mastertitelform</span>
<span class="t " style="left:471.41px;top:405.00px;font-size:51.6px;line-height:58px;color:#fff;letter-spacing:-0.074px;-webkit-text-stroke:.35px #fff;">at bearbeiten</span>
<svg style="left:430px;top:218px" width="45" height="44" viewBox="0 0 45 44">
<path d="M19.5 9.3 L22.6 12.9 H20.2 V16.6 H24 V14.4 L27.8 17.3 L24 20.2 V18 H20.2 V21.7 H22.6 L19.5 25.3 L16.4 21.7 H18.8 V18 H15 V20.2 L11.2 17.3 L15 14.4 V16.6 H18.8 V12.9 H16.4 Z" fill="#0d0d0d" stroke="#a4aba8" stroke-width="0.9" stroke-linejoin="round"/>
<path d="M19.6 18.3 V32.4 L22.8 29.4 L25.6 35.6 L28 34.5 L25.2 28.4 H30 Z" fill="#fff" stroke="#26312d" stroke-width="0.7" stroke-linejoin="round"/>
</svg>
<div style="position:absolute;left:-12px;top:-12px;width:954px;height:12.9px;background:#fdfdfd;"></div>
<div style="position:absolute;left:-12px;top:-12px;width:12.9px;height:532px;background:#fbfbfb;"></div>
</div></div></div>
</body>
</html>
